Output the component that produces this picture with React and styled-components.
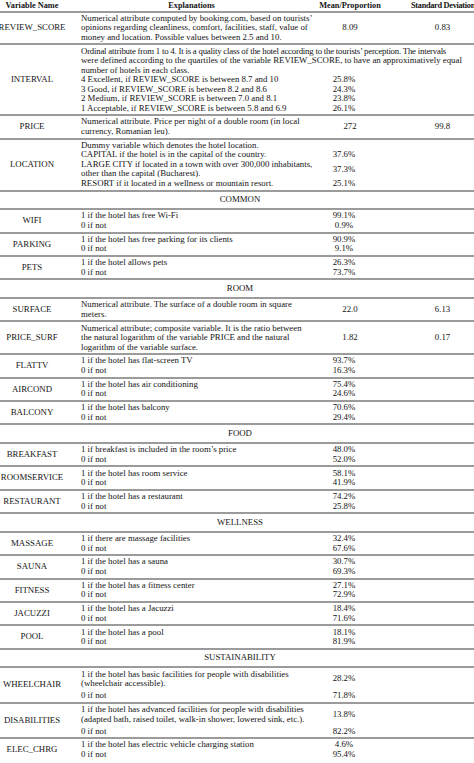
import styled, { createGlobalStyle } from 'styled-components'

const GlobalStyle = createGlobalStyle`
  html, body {
    margin: 0;
    padding: 0;
    background: #ffffff;
  }
  body {
    font-family: "Liberation Serif", "Times New Roman", serif;
    color: #141414;
  }
`

const Table = styled.div`
  width: 474px;
  overflow: hidden;
  font-size: 8.8px;
  line-height: 9.5px;
`

const Row = styled.div`
  display: grid;
  grid-template-columns: 64px 313px 1fr;
  column-gap: 17px;
  padding: 1.2px 0;
  border-bottom: ${({ $last }) => ($last ? 'none' : '2px solid #9b9b9b')};
`

const HeaderRow = styled(Row)`
  padding: 0.5px 0;
  font-weight: 700;
  font-size: 8.3px;
`

const NameCell = styled.div`
  display: flex;
  align-items: center;
  justify-content: center;
  white-space: nowrap;
`

const Body = styled.div`
  display: flex;
  flex-direction: column;
  min-width: 0;
`

const SubRow = styled.div`
  display: grid;
  grid-template-columns: 1fr 68px;
  margin-right: 10px;
  margin-top: ${({ $gap }) => ($gap ? '2.5px' : '0')};
`

const Desc = styled.div`
  min-width: 0;
  white-space: nowrap;
  text-align: ${({ $center }) => ($center ? 'center' : 'left')};
  padding-right: ${({ $center }) => ($center ? '14px' : '0')};
`

const Line = styled.div`
  letter-spacing: ${({ $tight }) => ($tight ? '-0.22px' : 'normal')};
`

const Mean = styled.div`
  display: flex;
  align-items: center;
  justify-content: center;
  white-space: nowrap;
  padding-right: ${({ $pct }) => ($pct ? '12px' : '0')};
`

const SdCell = styled.div`
  display: flex;
  align-items: center;
  justify-content: ${({ $end }) => ($end ? 'flex-end' : 'center')};
  white-space: nowrap;
  letter-spacing: ${({ $end }) => ($end ? '-0.3px' : 'normal')};
`

const SectionRow = styled.div`
  padding: 3.6px 0 3.6px 6px;
  text-align: center;
  border-bottom: 2px solid #9b9b9b;
`

const rows = [
  {
    name: 'REVIEW_SCORE',
    sd: '0.83',
    items: [
      {
        lines: [
          'Numerical attribute computed by booking.com, based on tourists’',
          'opinions regarding cleanliness, comfort, facilities, staff, value of',
          'money and location. Possible values between 2.5 and 10.',
        ],
        mean: '8.09',
      },
    ],
  },
  {
    name: 'INTERVAL',
    items: [
      {
        lines: [
          'Ordinal attribute from 1 to 4. It is a quality class of the hotel according to the tourists’ perception. The intervals',
          'were defined according to the quartiles of the variable REVIEW_SCORE, to have an approximatively equal',
          'number of hotels in each class.',
        ],
        tight: true,
      },
      { lines: ['4 Excellent, if REVIEW_SCORE is between 8.7 and 10'], mean: '25.8%' },
      { lines: ['3 Good, if REVIEW_SCORE is between 8.2 and 8.6'], mean: '24.3%' },
      { lines: ['2 Medium, if REVIEW_SCORE is between 7.0 and 8.1'], mean: '23.8%' },
      { lines: ['1 Acceptable, if REVIEW_SCORE is between 5.8 and 6.9'], mean: '26.1%' },
    ],
  },
  {
    name: 'PRICE',
    sd: '99.8',
    items: [
      {
        lines: [
          'Numerical attribute. Price per night of a double room (in local',
          'currency, Romanian leu).',
        ],
        mean: '272',
      },
    ],
  },
  {
    name: 'LOCATION',
    items: [
      { lines: ['Dummy variable which denotes the hotel location.'] },
      { lines: ['CAPITAL if the hotel is in the capital of the country.'], mean: '37.6%' },
      {
        lines: [
          'LARGE CITY if located in a town with over 300,000 inhabitants,',
          'other than the capital (Bucharest).',
        ],
        mean: '37.3%',
      },
      { lines: ['RESORT if it located in a wellness or mountain resort.'], mean: '25.1%' },
    ],
  },
  { section: 'COMMON' },
  { name: 'WIFI', yes: '1 if the hotel has free Wi-Fi', p1: '99.1%', p0: '0.9%' },
  { name: 'PARKING', yes: '1 if the hotel has free parking for its clients', p1: '90.9%', p0: '9.1%' },
  { name: 'PETS', yes: '1 if the hotel allows pets', p1: '26.3%', p0: '73.7%' },
  { section: 'ROOM' },
  {
    name: 'SURFACE',
    sd: '6.13',
    items: [
      {
        lines: ['Numerical attribute. The surface of a double room in square', 'meters.'],
        mean: '22.0',
      },
    ],
  },
  {
    name: 'PRICE_SURF',
    sd: '0.17',
    items: [
      {
        lines: [
          'Numerical attribute; composite variable. It is the ratio between',
          'the natural logarithm of the variable PRICE and the natural',
          'logarithm of the variable surface.',
        ],
        mean: '1.82',
      },
    ],
  },
  { name: 'FLATTV', yes: '1 if the hotel has flat-screen TV', p1: '93.7%', p0: '16.3%' },
  { name: 'AIRCOND', yes: '1 if the hotel has air conditioning', p1: '75.4%', p0: '24.6%' },
  { name: 'BALCONY', yes: '1 if the hotel has balcony', p1: '70.6%', p0: '29.4%' },
  { section: 'FOOD' },
  { name: 'BREAKFAST', yes: '1 if breakfast is included in the room’s price', p1: '48.0%', p0: '52.0%' },
  { name: 'ROOMSERVICE', yes: '1 if the hotel has room service', p1: '58.1%', p0: '41.9%' },
  { name: 'RESTAURANT', yes: '1 if the hotel has a restaurant', p1: '74.2%', p0: '25.8%' },
  { section: 'WELLNESS' },
  { name: 'MASSAGE', yes: '1 if there are massage facilities', p1: '32.4%', p0: '67.6%' },
  { name: 'SAUNA', yes: '1 if the hotel has a sauna', p1: '30.7%', p0: '69.3%' },
  { name: 'FITNESS', yes: '1 if the hotel has a fitness center', p1: '27.1%', p0: '72.9%' },
  { name: 'JACUZZI', yes: '1 if the hotel has a Jacuzzi', p1: '18.4%', p0: '71.6%' },
  { name: 'POOL', yes: '1 if the hotel has a pool', p1: '18.1%', p0: '81.9%' },
  { section: 'SUSTAINABILITY' },
  {
    name: 'WHEELCHAIR',
    yes: ['1 if the hotel has basic facilities for people with disabilities', '(wheelchair accessible).'],
    p1: '28.2%',
    p0: '71.8%',
  },
  {
    name: 'DISABILITIES',
    yes: [
      '1 if the hotel has advanced facilities for people with disabilities',
      '(adapted bath, raised toilet, walk-in shower, lowered sink, etc.).',
    ],
    p1: '13.8%',
    p0: '82.2%',
  },
  {
    name: 'ELEC_CHRG',
    yes: '1 if the hotel has electric vehicle charging station',
    p1: '4.6%',
    p0: '95.4%',
  },
]

// binary rows are written short: turn them into two items
function itemsOf(row) {
  if (row.items) return row.items
  const multi = Array.isArray(row.yes)
  return [
    { lines: multi ? row.yes : [row.yes], mean: row.p1 },
    { lines: ['0 if not'], mean: row.p0, gap: multi },
  ]
}

function VariableRow({ row, last }) {
  return (
    <Row $last={last}>
      <NameCell>{row.name}</NameCell>
      <Body>
        {itemsOf(row).map((item, i) => (
          <SubRow key={i} $gap={item.gap}>
            <Desc>
              {item.lines.map((l, j) => (
                <Line key={l} $tight={item.tight && j === 0}>
                  {l}
                </Line>
              ))}
            </Desc>
            <Mean $pct={item.mean && item.mean.endsWith('%')}>{item.mean}</Mean>
          </SubRow>
        ))}
      </Body>
      <SdCell>{row.sd}</SdCell>
    </Row>
  )
}

export default function App() {
  return (
    <>
      <GlobalStyle />
      <Table>
        <HeaderRow>
          <NameCell>Variable Name</NameCell>
          <Body>
            <SubRow>
              <Desc $center>Explanations</Desc>
              <Mean>Mean/Proportion</Mean>
            </SubRow>
          </Body>
          <SdCell $end>Standard Deviation</SdCell>
        </HeaderRow>
        {rows.map((row, i) =>
          row.section ? (
            <SectionRow key={row.section}>{row.section}</SectionRow>
          ) : (
            <VariableRow key={row.name} row={row} last={i === rows.length - 1} />
          ),
        )}
      </Table>
    </>
  )
}
